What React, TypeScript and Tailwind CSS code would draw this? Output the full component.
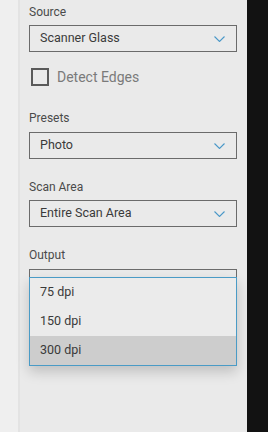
import React from "react";

function Chevron() {
  return (
    <svg width="11" height="6" viewBox="0 0 11 6" fill="none">
      <path d="M0.5 0.5 L5.5 5.5 L10.5 0.5" stroke="#4a98c8" strokeWidth="1.1" />
    </svg>
  );
}

function Select({ value }: { value: string }) {
  return (
    <div className="h-[27px] w-[208px] border border-[#6b6b6b] flex items-center justify-between pl-[10px] pr-[11px] text-[12.5px] text-[#3a3a3a]">
      <span>{value}</span>
      <Chevron />
    </div>
  );
}

function Label({ text }: { text: string }) {
  return <div className="h-[16px] leading-[16px] text-[12px] text-[#4a4a4a]">{text}</div>;
}

export default function App() {
  return (
    <div
      className="w-[268px] h-[432px] flex bg-[#121212]"
      style={{ fontFamily: "Roboto, 'Noto Sans', sans-serif" }}
    >
      <div className="w-[20px] h-full bg-[#efefef] border-r-2 border-[#e3e3e3]" />
      <div className="w-[227px] h-full bg-[#eaeaea] pl-[9px] pt-[4px] flex flex-col">
        <Label text="Source" />
        <div className="mt-[5px]">
          <Select value="Scanner Glass" />
        </div>
        <div className="mt-[16px] flex items-center h-[18px] pl-[2px]">
          <div className="w-[18px] h-[18px] border-2 border-[#5a5a5a]" />
          <span className="ml-[8px] text-[14px] text-[#7a7a7a]">Detect Edges</span>
        </div>
        <div className="mt-[24px]">
          <Label text="Presets" />
        </div>
        <div className="mt-[6px]">
          <Select value="Photo" />
        </div>
        <div className="mt-[20px]">
          <Label text="Scan Area" />
        </div>
        <div className="mt-[5px]">
          <Select value="Entire Scan Area" />
        </div>
        <div className="mt-[20px]">
          <Label text="Output" />
        </div>
        <div className="mt-[6px] relative">
          <div className="h-[27px] w-[208px] border border-[#6b6b6b]" />
          <div className="absolute left-0 top-[8px] w-[208px] border border-[#4a9bc6] bg-[#ebebeb] shadow-[0_6px_12px_rgba(0,0,0,0.18)] text-[12.5px] text-[#3a3a3a]">
            <div className="h-[29px] flex items-center pl-[10px]">75 dpi</div>
            <div className="h-[29px] flex items-center pl-[10px]">150 dpi</div>
            <div className="h-[29px] flex items-center pl-[10px] bg-[#cdcdcd]">300 dpi</div>
          </div>
        </div>
      </div>
      <div className="flex-1" />
    </div>
  );
}
